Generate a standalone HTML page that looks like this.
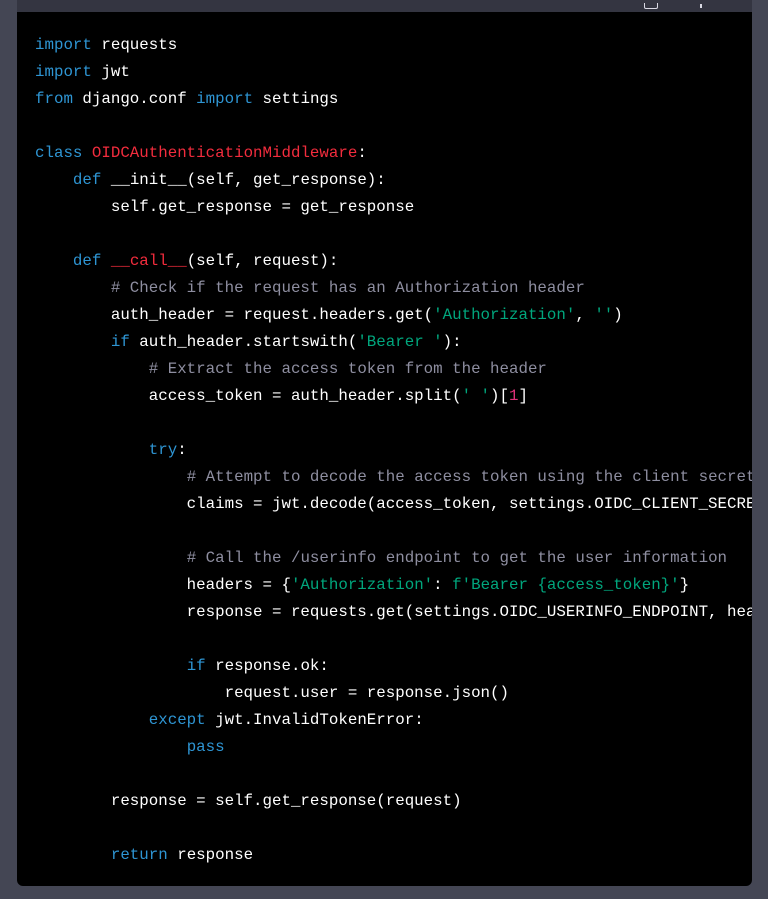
<!DOCTYPE html>
<html><head><meta charset="utf-8"><style>
html,body{margin:0;padding:0;background:#444654;width:768px;height:899px;overflow:hidden}
.box{position:absolute;left:17px;top:-10px;width:735px;height:896px;background:#000;border-radius:6px;overflow:hidden}
.hdr{position:absolute;left:0;top:0;width:100%;height:22px;background:#343541}
.hdr .i1{position:absolute;left:627px;top:13px;width:12px;height:5px;border:1.5px solid #d9d9e3;border-top:none;border-radius:0 0 2px 2px}
.hdr .i2{position:absolute;left:683px;top:14px;width:2px;height:4px;background:#d9d9e3}
pre{position:absolute;left:18px;top:42px;margin:0;font-family:"Liberation Mono",monospace;font-size:15.8px;line-height:27px;color:#fff;white-space:pre}
.k{color:#2e95d3}.c{color:#f22c3d}.s{color:#00a67d}.m{color:#8e8ea0}.n{color:#df3079}
</style></head><body>
<div class="box"><div class="hdr"><div class="i1"></div><div class="i2"></div></div>
<pre><span class="k">import</span> requests
<span class="k">import</span> jwt
<span class="k">from</span> django.conf <span class="k">import</span> settings

<span class="k">class</span> <span class="c">OIDCAuthenticationMiddleware</span>:
    <span class="k">def</span> __init__(self, get_response):
        self.get_response = get_response

    <span class="k">def</span> <span class="c">__call__</span>(self, request):
        <span class="m"># Check if the request has an Authorization header</span>
        auth_header = request.headers.get(<span class="s">'Authorization'</span>, <span class="s">''</span>)
        <span class="k">if</span> auth_header.startswith(<span class="s">'Bearer '</span>):
            <span class="m"># Extract the access token from the header</span>
            access_token = auth_header.split(<span class="s">' '</span>)[<span class="n">1</span>]

            <span class="k">try</span>:
                <span class="m"># Attempt to decode the access token using the client secret</span>
                claims = jwt.decode(access_token, settings.OIDC_CLIENT_SECRET, algorithms=[<span class="s">'HS256'</span>])

                <span class="m"># Call the /userinfo endpoint to get the user information</span>
                headers = {<span class="s">'Authorization'</span>: <span class="s">f'Bearer {access_token}'</span>}
                response = requests.get(settings.OIDC_USERINFO_ENDPOINT, headers=headers)

                <span class="k">if</span> response.ok:
                    request.user = response.json()
            <span class="k">except</span> jwt.InvalidTokenError:
                <span class="k">pass</span>

        response = self.get_response(request)

        <span class="k">return</span> response</pre>
</div>
</body></html>
